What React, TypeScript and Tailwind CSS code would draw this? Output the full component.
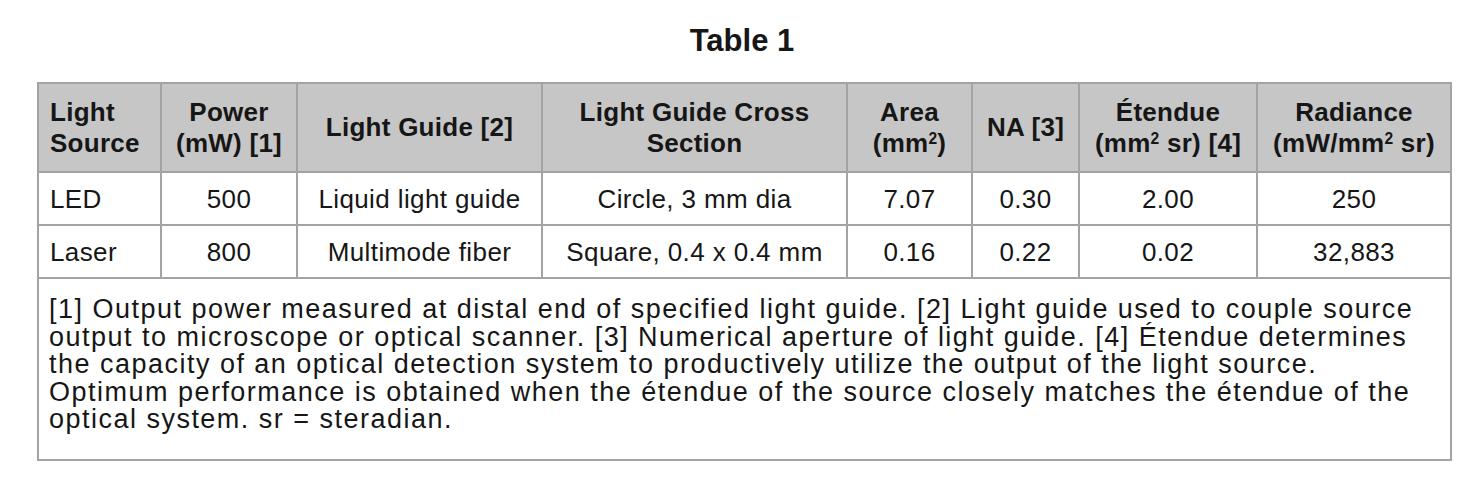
import React from 'react';

const cols = [123, 136, 245, 305, 125, 107, 178, 194];

const headers: React.ReactNode[] = [
  <>Light<br />Source</>,
  <>Power<br />(mW) [1]</>,
  'Light Guide [2]',
  <>Light Guide Cross<br />Section</>,
  <>Area<br />(mm<sup className="text-[0.6em]">2</sup>)</>,
  'NA [3]',
  <>Étendue<br />(mm<sup className="text-[0.6em]">2</sup> sr) [4]</>,
  <>Radiance<br />(mW/mm<sup className="text-[0.6em]">2</sup> sr)</>,
];

const rows = [
  ['LED', '500', 'Liquid light guide', 'Circle, 3 mm dia', '7.07', '0.30', '2.00', '250'],
  ['Laser', '800', 'Multimode fiber', 'Square, 0.4 x 0.4 mm', '0.16', '0.22', '0.02', '32,883'],
];

const notes = [
  '[1] Output power measured at distal end of specified light guide. [2] Light guide used to couple source',
  'output to microscope or optical scanner. [3] Numerical aperture of light guide. [4] Étendue determines',
  'the capacity of an optical detection system to productively utilize the output of the light source.',
  'Optimum performance is obtained when the étendue of the source closely matches the étendue of the',
  'optical system. sr = steradian.',
];

export default function App() {
  return (
    <div
      className="w-[1484px] h-[480px] bg-white text-[#161616] overflow-hidden"
      style={{ fontFamily: '"Liberation Sans", Arial, sans-serif' }}
    >
      <h1 className="pt-[23px] text-center text-[31px] leading-[35px] font-bold">Table 1</h1>
      <div className="pl-[37px] pt-[24px]">
        <table className="table-fixed border-collapse border-2 border-[#a3a3a3] w-[1413px]">
          <colgroup>
            {cols.map((w, i) => (
              <col key={i} style={{ width: w }} />
            ))}
          </colgroup>
          <thead>
            <tr className="bg-[#c6c6c6] h-[89px]">
              {headers.map((h, i) => (
                <th
                  key={i}
                  className={`border-2 border-[#a3a3a3] text-[26px] leading-[31px] tracking-[0.01em] font-bold align-middle ${
                    i === 0 ? 'text-left pl-[11px]' : 'text-center'
                  }`}
                >
                  {h}
                </th>
              ))}
            </tr>
          </thead>
          <tbody>
            {rows.map((r, ri) => (
              <tr key={ri} className="h-[53px]">
                {r.map((c, ci) => (
                  <td
                    key={ci}
                    className={`border-2 border-[#a3a3a3] text-[26px] leading-[30px] tracking-[0.015em] align-middle ${
                      ci === 0 ? 'text-left pl-[11px]' : 'text-center'
                    }`}
                  >
                    {c}
                  </td>
                ))}
              </tr>
            ))}
            <tr>
              <td colSpan={8} className="border-2 border-[#a3a3a3] px-[10px] pt-[17px] pb-[25px] text-[27px] leading-[27.5px] tracking-[0.055em] text-left">
                {notes.map((line, i) => (
                  <div key={i} className="whitespace-nowrap">
                    {line}
                  </div>
                ))}
              </td>
            </tr>
          </tbody>
        </table>
      </div>
    </div>
  );
}
